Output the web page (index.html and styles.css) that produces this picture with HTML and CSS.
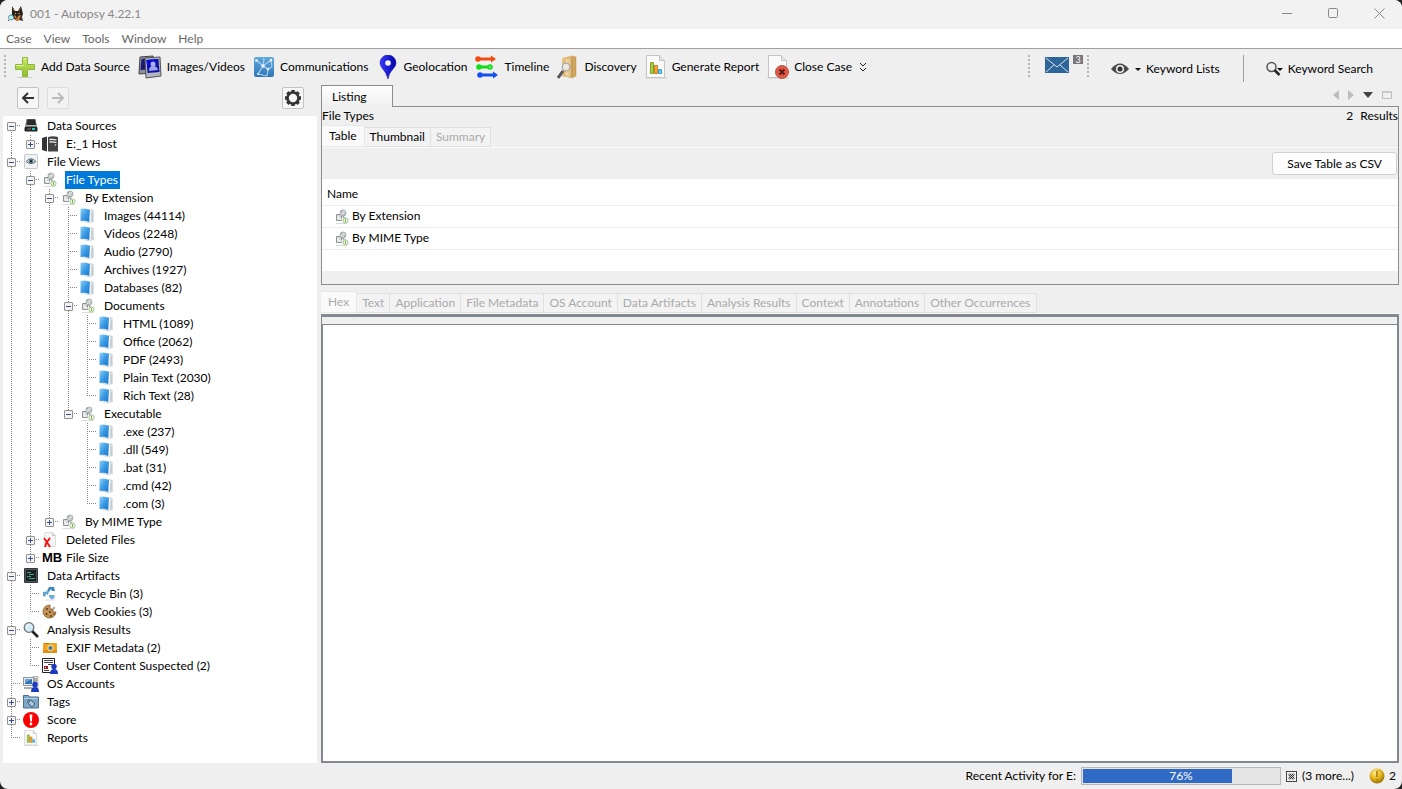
FILE: index.html
```html
<!DOCTYPE html>
<html lang="en">
<head>
    <meta charset="UTF-8">
    <meta name="viewport" content="width=device-width, initial-scale=1.0">
    <title>001 - Autopsy 4.22.1</title>
    <link rel="stylesheet" href="styles.css">
</head>
<body>
    <!-- Shared icons -->
    <svg class="sprite" aria-hidden="true">
        <defs>
            <linearGradient id="g-blue" x1="0" y1="0" x2="1" y2="1">
                <stop offset="0" stop-color="#8fd2f7"/><stop offset=".5" stop-color="#3a9ae4"/><stop offset="1" stop-color="#1474cc"/>
            </linearGradient>
            <linearGradient id="g-grey" x1="0" y1="0" x2="1" y2="0">
                <stop offset="0" stop-color="#eef2f4"/><stop offset="1" stop-color="#b9c3c9"/>
            </linearGradient>
            <linearGradient id="g-comm" x1="0" y1="0" x2="0" y2="1">
                <stop offset="0" stop-color="#62a8dc"/><stop offset="1" stop-color="#2f76b8"/>
            </linearGradient>
            <linearGradient id="g-green" x1="0" y1="0" x2="0" y2="1">
                <stop offset="0" stop-color="#cdea6a"/><stop offset="1" stop-color="#8dbe2c"/>
            </linearGradient>
            <linearGradient id="g-pin" x1="0" y1="0" x2="1" y2="0">
                <stop offset="0" stop-color="#3a3aff"/><stop offset="1" stop-color="#0000a8"/>
            </linearGradient>
            <linearGradient id="g-folder" x1="0" y1="0" x2="1" y2="0">
                <stop offset="0" stop-color="#f7dfae"/><stop offset="1" stop-color="#c99a52"/>
            </linearGradient>
            <radialGradient id="g-gold" cx=".4" cy=".3" r=".7">
                <stop offset="0" stop-color="#fff0a0"/><stop offset=".5" stop-color="#e8b91c"/><stop offset="1" stop-color="#9c7406"/>
            </radialGradient>
        </defs>
        <symbol id="i-disk" viewBox="0 0 16 16">
            <path d="M3.500 1h9l1.500 8H2z" fill="#777"/><path d="M4.500 1.500h7.500l1 5.500H3.500z" fill="#2a2a2a"/><path d="M3 7.500h10" stroke="#b5b5b5"/>
            <rect x="1.500" y="9" width="13" height="4.500" rx="1" fill="#222"/><path d="M4 11h4" stroke="#777"/><rect x="9" y="10" width="3" height="2" fill="#19c8c8"/>
        </symbol>
        <symbol id="i-host" viewBox="0 0 16 16">
            <path d="M0 2l5-1.500v15l-5-1.500z" fill="#333"/><path d="M6 1q5-1.500 10 0v14.500H6z" fill="#444"/><path d="M7.500 3.500q4-.5 7 .5M7.500 6q4-.5 7 .5" fill="none" stroke="#eee" stroke-width="1.300"/><circle cx="13.500" cy="9" r=".8" fill="#eee"/>
        </symbol>
        <symbol id="i-view" viewBox="0 0 16 16">
            <rect x="1.500" y=".5" width="13" height="14" rx="1" fill="#f1f2f4" stroke="#c4c8cc"/>
            <path d="M3 7.500q5-5.500 10 0q-5 4-10 0z" fill="#dfe6ea" stroke="#5f676c"/><circle cx="8" cy="7.200" r="2.300" fill="#4b8191"/><circle cx="8" cy="7.200" r="1" fill="#111"/>
        </symbol>
        <symbol id="i-types" viewBox="0 0 16 16">
            <path d="M1 14h13l-2 1H2z" fill="#ddd"/>
            <path d="M2.500 5.500h5v6h-5z" fill="#d5d7d9" stroke="#909396"/><path d="M4 7v3h4" fill="none" stroke="#fff"/>
            <circle cx="9" cy="4" r="3" fill="#dde5e8" stroke="#a4a8ac"/><circle cx="9" cy="4" r="1.200" fill="#fff" stroke="#b09a90" stroke-width=".6"/>
            <path d="M7 2l1 1M11 5l-1 0" stroke="#67b7c4"/><path d="M8 6l3 4" stroke="#a8abad" stroke-width="1.500"/>
            <circle cx="11.500" cy="11.500" r="2.600" fill="#f2f9ea" stroke="#a3be8e"/><path d="M11.500 10v3" stroke="#6cb53d"/>
        </symbol>
        <symbol id="i-file" viewBox="0 0 16 16">
            <path d="M1 13.500l9 2 4-2v-1z" fill="#d3dade"/><path d="M8 .5l5.500 1.500v11l-4.500 2z" fill="url(#g-grey)"/><path d="M.5 1q5-1.500 9.500 1l-.5 12q-4-2-9-1z" fill="url(#g-blue)"/>
            <path d="M10.500 2l-.5 12.500" stroke="#fff"/><path d="M10.500 4l3-.5" stroke="#fff" stroke-width=".6"/>
        </symbol>
        <symbol id="i-deleted" viewBox="0 0 16 16">
            <path d="M2.500.5h8l3 3v11h-11z" fill="#f5f5f5" stroke="#dcdcdc"/><path d="M10.500.5v3h3" fill="#ddd" stroke="#ccc"/>
            <path d="M2 6q3 4 6 9M8 6q-4 4-5 9" fill="none" stroke="#f01010" stroke-width="1.800"/>
        </symbol>
        <symbol id="i-artifact" viewBox="0 0 16 16">
            <rect x="1" y="0" width="14" height="15" rx="1" fill="#30383a"/><rect x="2.500" y="1.500" width="11" height="12" fill="#1c2022" stroke="#555"/>
            <path d="M4 4.500h4M6 6.500h5M4 8.500h4M6 10.500h6" stroke="#3fa58a"/>
        </symbol>
        <symbol id="i-recycle" viewBox="0 0 16 16">
            <path d="M5 5l2-4 5 0 1 4-3 0-1-2-2 3z" fill="#3d86bd"/><path d="M1 6l6-1-1 4-2-1-1 3-2-1z" fill="#5fa5d3"/>
            <path d="M7 9l5 0 1 2-3 3-3-3z" fill="#6fb1da"/><path d="M3 14h10" stroke="#ddd"/>
        </symbol>
        <symbol id="i-cookie" viewBox="0 0 16 16">
            <path d="M8 1q-6 0-7 6 0 6 6 7 6 0 7-6l-3 0 0-3-3 0z" fill="#c39355" stroke="#835c2f" stroke-width=".8"/>
            <g fill="#5b3a1c"><circle cx="5" cy="5" r="1"/><circle cx="8" cy="8" r="1"/><circle cx="4.500" cy="10" r="1"/><circle cx="9" cy="12" r=".9"/><circle cx="12" cy="4" r=".8"/><circle cx="12" cy="10" r=".7"/></g>
        </symbol>
        <symbol id="i-search" viewBox="0 0 16 16">
            <path d="M9 9l6 6" stroke="#222" stroke-width="2.600"/><circle cx="6" cy="5.500" r="4.800" fill="#d5ebf6" stroke="#6b7278" stroke-width="1.300"/><path d="M3.500 5q1-2.500 3-2.500" fill="none" stroke="#fff"/>
        </symbol>
        <symbol id="i-camera" viewBox="0 0 16 16">
            <path d="M1 4q0-1 1-1h12q1 0 1 1v8q0 1-1 1H2q-1 0-1-1z" fill="#efa31e"/><path d="M2 3h5v1H2z" fill="#c67a10"/><path d="M1 10h14v2q0 1-1 1H2q-1 0-1-1z" fill="#e58c14"/>
            <circle cx="8.500" cy="8" r="3.200" fill="#f7d38a"/><circle cx="8.500" cy="8" r="2.100" fill="#3f7f9a"/>
        </symbol>
        <symbol id="i-suspect" viewBox="0 0 16 16">
            <path d="M.5.500h12v14H.5z" fill="#fff" stroke="#222"/><path d="M2 2.500h9M2 4.500h9M6 6.500h4M2 12.500h5" stroke="#444"/><rect x="2" y="8" width="4" height="3" fill="#a31525"/><rect x="3" y="9" width="1" height="1" fill="#fff"/>
            <circle cx="12" cy="8.500" r="2.700" fill="#1c3ac0"/><path d="M8 16q0-5 4-5t4 5z" fill="#1c3ac0"/>
        </symbol>
        <symbol id="i-accounts" viewBox="0 0 16 16">
            <rect x="10" y="0" width="5" height="13" fill="#cfd2d5" stroke="#999" stroke-width=".6"/><path d="M11 3h3M11 5h3" stroke="#888"/>
            <rect x=".5" y="1.500" width="10" height="8" fill="#e6eaee" stroke="#8e979e"/><rect x="2" y="3" width="7" height="5" fill="#2f72b5"/><path d="M2 3h7l-7 4z" fill="#68a3d9"/><path d="M1 12h8" stroke="#a8adb1" stroke-width="2"/>
            <circle cx="12" cy="8.500" r="2.700" fill="#1c3ac0"/><path d="M8 16q0-5 4-5t4 5z" fill="#1c3ac0"/>
        </symbol>
        <symbol id="i-tags" viewBox="0 0 16 16">
            <path d="M.5 1.500h5l1 1.500h9v11H.5z" fill="#7fa8c8" stroke="#4b6f8c"/><path d="M1 4.500h14" stroke="#b3d0e5"/><path d="M5 6h3l4 4-3 3-4-4z" fill="#a9c7dc" stroke="#3c5d78"/><circle cx="6.600" cy="7.500" r=".7" fill="#3c5d78"/>
        </symbol>
        <symbol id="i-score" viewBox="0 0 16 16">
            <circle cx="8" cy="8" r="8" fill="#f80000"/><path d="M6.600 2.500h2.800l-.5 7H7.100z" fill="#fff"/><circle cx="8" cy="12" r="1.400" fill="#fff"/>
        </symbol>
        <symbol id="i-report" viewBox="0 0 22 24">
            <path d="M0 23h22" stroke="#cfcfcf"/><path d="M1.500.5h13l5 5v17h-18z" fill="#fafafa" stroke="#c4c4c4"/><path d="M14.500.5v5h5" fill="#e7e7e7" stroke="#c4c4c4"/>
            <path d="M5.500 7.500h3v11h-3z" fill="#a8cc45" stroke="#7ca226"/><path d="M9.500 10.500h3v8h-3z" fill="#f2a645" stroke="#cf7d1b"/><path d="M13.500 14.500h3v4h-3z" fill="#73c8ea" stroke="#369cc8"/>
        </symbol>
    </svg>

    <div class="window">
        <header class="titlebar">
            <svg class="app-icon" viewBox="0 0 16 16" aria-hidden="true">
                <path d="M4 0l3 5h3l3-5 2 8-2 5-4 2-5-4z" fill="#24211f"/><path d="M5 2l1 3M12 2l-1 3" stroke="#8b5a3c"/>
                <path d="M6 9l2 1 1 3 1-3 3-1-2 5-3 1z" fill="#d88634"/><circle cx="7.500" cy="7.500" r=".7" fill="#e8a050"/><circle cx="11" cy="7.500" r=".7" fill="#e8a050"/>
                <path d="M6 13l3-1" stroke="#6b2d1a"/><circle cx="3" cy="11.500" r="2.500" fill="#c8eef4" stroke="#4694a6"/><path d="M1 14l-1 1" stroke="#444"/><path d="M11 14l4 1-1-4z" fill="#333"/>
            </svg>
            <h1>001 - Autopsy 4.22.1</h1>
            <button class="caption" aria-label="Minimize"><svg viewBox="0 0 11 11"><path d="M0 5.500h10"/></svg></button>
            <button class="caption" aria-label="Maximize"><svg viewBox="0 0 11 11"><rect x=".5" y=".5" width="9" height="9" rx="1"/></svg></button>
            <button class="caption" aria-label="Close"><svg viewBox="0 0 11 11"><path d="M.5.500l10 10M10.500.5l-10 10"/></svg></button>
        </header>

        <nav class="menubar">
            <button>Case</button>
            <button>View</button>
            <button>Tools</button>
            <button>Window</button>
            <button>Help</button>
        </nav>

        <div class="toolbar">
            <span class="grip"></span>
            <button class="tool">
                <svg width="22" height="24" viewBox="0 0 22 24"><path d="M2 22h18l-3 1H5z" fill="#ccc"/><path d="M8.500 2.500h5v7h7v5h-7v7h-5v-7h-7v-5h7z" fill="url(#g-green)" stroke="#8fb83a"/><path d="M9.500 3.500h3M2.500 10.500h7" stroke="#e6f5a8"/></svg>
                Add Data Source
            </button>
            <button class="tool">
                <svg width="24" height="24" viewBox="0 0 24 24"><path d="M2 2l13-1 2 17-16 1z" fill="#8d909a" stroke="#444"/><path d="M3.500 4l9-1 1 11-11 1z" fill="#1a1a70"/><path d="M7 3l15-1 1 19-15 2z" fill="#b4b6be" stroke="#555"/><path d="M8.500 5l12-1 1 13-12 1z" fill="#1414a4"/><path d="M8.500 5l12-1-11 9z" fill="#0808d8"/><circle cx="15" cy="9" r="2.500" fill="#a8b0f4"/><path d="M11 16q0-5 4-5t5 4z" fill="#a0a6ee"/></svg>
                Images/Videos
            </button>
            <button class="tool">
                <svg width="22" height="24" viewBox="0 0 22 24"><rect x="1" y="2" width="20" height="20" rx="2" fill="url(#g-comm)"/><path d="M3 5l7 6 8-6M10 11l-5 8M10 11l5 3 4-2M15 14l-1 7M10 11l1-8M5 19l9 2M18 5l1 7" fill="none" stroke="#a9d0ee" stroke-width="1.200"/><g fill="#e8f4fc"><circle cx="10" cy="11" r="1.800"/><circle cx="3.500" cy="5.500" r="1.300"/><circle cx="18" cy="5" r="1.300"/><circle cx="15" cy="14" r="1.300"/><circle cx="5" cy="19" r="1"/></g></svg>
                Communications
            </button>
            <button class="tool">
                <svg width="22" height="24" viewBox="0 0 22 24"><path d="M11 24Q9 17 5 13Q3 10 3 8a8 8 0 0 1 16 0q0 3-3 6-4 4-5 10z" fill="url(#g-pin)" stroke="#1a1aa0" stroke-width=".6"/><circle cx="11" cy="8" r="2.800" fill="#f4f4ff"/></svg>
                Geolocation
            </button>
            <button class="tool">
                <svg width="24" height="24" viewBox="0 0 24 24" fill="none" stroke-width="3"><g stroke="#f24a12" fill="#f24a12"><path d="M3 4h15"/><circle cx="3" cy="4" r="1.300"/><path d="M16 .5l5 3.500-5 3.500z" stroke="none"/></g><g stroke="#12dc1c"><path d="M4 12h10"/><circle cx="4" cy="12" r="1.300"/><circle cx="15" cy="12" r="1.800" stroke-width="2"/></g><g stroke="#1450f0" fill="#1450f0"><path d="M6 20h13"/><circle cx="5" cy="20" r="1.300"/><path d="M18 16.500l5 3.500-5 3.500z" stroke="none"/></g></svg>
                Timeline
            </button>
            <button class="tool">
                <svg width="22" height="24" viewBox="0 0 22 24"><path d="M5 3l8-2v20l-8 1z" fill="#e7c183"/><path d="M8 4l7-3 4 1v19l-4 2-7-2z" fill="url(#g-folder)" stroke="#c79a58" stroke-width=".6"/><path d="M15 2v20" stroke="#b58542"/><path d="M6 16l-5 7" stroke="#555" stroke-width="3"/><circle cx="9" cy="12" r="3.800" fill="#eee9e0" stroke="#aaa" stroke-width="1.300"/></svg>
                Discovery
            </button>
            <button class="tool">
                <svg width="22" height="24"><use href="#i-report"/></svg>
                Generate Report
            </button>
            <button class="tool">
                <svg width="22" height="24" viewBox="0 0 22 24"><path d="M0 23h22" stroke="#cfcfcf"/><path d="M1.500.5h13l5 5v17h-18z" fill="#fafafa" stroke="#c4c4c4"/><path d="M14.500.5v5h5" fill="#e7e7e7" stroke="#c4c4c4"/><circle cx="15" cy="17" r="6.500" fill="#df5946" stroke="#b5564a"/><path d="M12.500 14.500l5 5M17.500 14.500l-5 5" stroke="#5f1a12" stroke-width="2"/></svg>
                Close Case
            </button>
            <button class="more" aria-label="More tools"><svg width="8" height="10" viewBox="0 0 8 10"><path d="M1 1l3 3 3-3M1 6l3 3 3-3" fill="none" stroke="#222"/></svg></button>

            <div class="toolbar-right">
                <span class="grip"></span>
                <button class="mail" aria-label="Messages">
                    <svg width="24" height="16" viewBox="0 0 24 16"><path d="M0 0h24v16H0z" fill="#2f6699"/><path d="M1 1l11 9L23 1M1 15l8-7M23 15l-8-7" fill="none" stroke="#d4e2ee"/></svg>
                    <span class="badge">3</span>
                </button>
                <span class="grip"></span>
                <button class="keyword">
                    <svg width="30" height="14" viewBox="0 0 30 14"><path d="M0 7q9-11 18 0q-9 10-18 0z" fill="#4a4a4a"/><circle cx="9" cy="7" r="4" fill="#f0f0f0"/><circle cx="9" cy="7" r="2.500" fill="#333"/><path d="M24 6h6l-3 3z" fill="#111"/></svg>
                    Keyword Lists
                </button>
                <span class="divider"></span>
                <button class="keyword">
                    <svg width="17" height="16" viewBox="0 0 17 16"><circle cx="5.500" cy="6" r="4.500" fill="#eee" stroke="#555" stroke-width="1.500"/><path d="M8.500 9l5 5" stroke="#222" stroke-width="2.500"/><path d="M11 7h6l-3 3z" fill="#111"/></svg>
                    Keyword Search
                </button>
            </div>
        </div>

        <main class="workspace">
            <aside class="explorer">
                <div class="explorer-nav">
                    <button aria-label="Back"><svg viewBox="0 0 16 16"><path d="M14 8H3M8 3L3 8l5 5" fill="none" stroke="#333" stroke-width="2"/></svg></button>
                    <button aria-label="Forward" disabled><svg viewBox="0 0 16 16"><path d="M2 8h11M8 3l5 5-5 5" fill="none" stroke="#bbb" stroke-width="2"/></svg></button>
                    <button class="settings" aria-label="Options"><svg viewBox="0 0 18 18"><circle cx="9" cy="9" r="5.500" fill="none" stroke="#333" stroke-width="2.600"/><path d="M9 1v3M9 14v3M1 9h3M14 9h3M3.300 3.300l2 2M12.700 12.700l2 2M14.700 3.300l-2 2M5.300 12.700l-2 2" stroke="#333" stroke-width="3.400"/></svg></button>
                </div>

                <ul class="tree">
                    <li>
                        <div class="node"><button class="toggle" aria-label="Collapse"></button><svg><use href="#i-disk"/></svg><span>Data Sources</span></div>
                        <ul>
                            <li><div class="node"><button class="toggle closed" aria-label="Expand"></button><svg><use href="#i-host"/></svg><span>E:_1 Host</span></div></li>
                        </ul>
                    </li>
                    <li>
                        <div class="node"><button class="toggle" aria-label="Collapse"></button><svg><use href="#i-view"/></svg><span>File Views</span></div>
                        <ul>
                            <li>
                                <div class="node selected"><button class="toggle" aria-label="Collapse"></button><svg><use href="#i-types"/></svg><span>File Types</span></div>
                                <ul>
                                    <li>
                                        <div class="node"><button class="toggle" aria-label="Collapse"></button><svg><use href="#i-types"/></svg><span>By Extension</span></div>
                                        <ul>
                                            <li><div class="node leaf"><svg><use href="#i-file"/></svg><span>Images (44114)</span></div></li>
                                            <li><div class="node leaf"><svg><use href="#i-file"/></svg><span>Videos (2248)</span></div></li>
                                            <li><div class="node leaf"><svg><use href="#i-file"/></svg><span>Audio (2790)</span></div></li>
                                            <li><div class="node leaf"><svg><use href="#i-file"/></svg><span>Archives (1927)</span></div></li>
                                            <li><div class="node leaf"><svg><use href="#i-file"/></svg><span>Databases (82)</span></div></li>
                                            <li>
                                                <div class="node"><button class="toggle" aria-label="Collapse"></button><svg><use href="#i-types"/></svg><span>Documents</span></div>
                                                <ul>
                                                    <li><div class="node leaf"><svg><use href="#i-file"/></svg><span>HTML (1089)</span></div></li>
                                                    <li><div class="node leaf"><svg><use href="#i-file"/></svg><span>Office (2062)</span></div></li>
                                                    <li><div class="node leaf"><svg><use href="#i-file"/></svg><span>PDF (2493)</span></div></li>
                                                    <li><div class="node leaf"><svg><use href="#i-file"/></svg><span>Plain Text (2030)</span></div></li>
                                                    <li><div class="node leaf"><svg><use href="#i-file"/></svg><span>Rich Text (28)</span></div></li>
                                                </ul>
                                            </li>
                                            <li>
                                                <div class="node"><button class="toggle" aria-label="Collapse"></button><svg><use href="#i-types"/></svg><span>Executable</span></div>
                                                <ul>
                                                    <li><div class="node leaf"><svg><use href="#i-file"/></svg><span>.exe (237)</span></div></li>
                                                    <li><div class="node leaf"><svg><use href="#i-file"/></svg><span>.dll (549)</span></div></li>
                                                    <li><div class="node leaf"><svg><use href="#i-file"/></svg><span>.bat (31)</span></div></li>
                                                    <li><div class="node leaf"><svg><use href="#i-file"/></svg><span>.cmd (42)</span></div></li>
                                                    <li><div class="node leaf"><svg><use href="#i-file"/></svg><span>.com (3)</span></div></li>
                                                </ul>
                                            </li>
                                        </ul>
                                    </li>
                                    <li><div class="node"><button class="toggle closed" aria-label="Expand"></button><svg><use href="#i-types"/></svg><span>By MIME Type</span></div></li>
                                </ul>
                            </li>
                            <li><div class="node"><button class="toggle closed" aria-label="Expand"></button><svg><use href="#i-deleted"/></svg><span>Deleted Files</span></div></li>
                            <li><div class="node"><button class="toggle closed" aria-label="Expand"></button><b class="mb">MB</b><span>File Size</span></div></li>
                        </ul>
                    </li>
                    <li>
                        <div class="node"><button class="toggle" aria-label="Collapse"></button><svg><use href="#i-artifact"/></svg><span>Data Artifacts</span></div>
                        <ul>
                            <li><div class="node leaf"><svg><use href="#i-recycle"/></svg><span>Recycle Bin (3)</span></div></li>
                            <li><div class="node leaf"><svg><use href="#i-cookie"/></svg><span>Web Cookies (3)</span></div></li>
                        </ul>
                    </li>
                    <li>
                        <div class="node"><button class="toggle" aria-label="Collapse"></button><svg><use href="#i-search"/></svg><span>Analysis Results</span></div>
                        <ul>
                            <li><div class="node leaf"><svg><use href="#i-camera"/></svg><span>EXIF Metadata (2)</span></div></li>
                            <li><div class="node leaf"><svg><use href="#i-suspect"/></svg><span>User Content Suspected (2)</span></div></li>
                        </ul>
                    </li>
                    <li><div class="node leaf"><svg><use href="#i-accounts"/></svg><span>OS Accounts</span></div></li>
                    <li><div class="node"><button class="toggle closed" aria-label="Expand"></button><svg><use href="#i-tags"/></svg><span>Tags</span></div></li>
                    <li><div class="node"><button class="toggle closed" aria-label="Expand"></button><svg><use href="#i-score"/></svg><span>Score</span></div></li>
                    <li><div class="node leaf"><svg><use href="#i-report"/></svg><span>Reports</span></div></li>
                </ul>
            </aside>

            <div class="content">
                <div class="listing-tabs">
                    <button class="listing-tab">Listing</button>
                    <div class="tab-controls">
                        <button aria-label="Previous" disabled><svg width="6" height="10" viewBox="0 0 6 10"><path d="M6 0v10L0 5z" fill="#bdbdbd"/></svg></button>
                        <button aria-label="Next" disabled><svg width="6" height="10" viewBox="0 0 6 10"><path d="M0 0v10l6-5z" fill="#bdbdbd"/></svg></button>
                        <button aria-label="Show list"><svg width="10" height="6" viewBox="0 0 10 6"><path d="M0 0h10L5 6z" fill="#444"/></svg></button>
                        <button aria-label="Maximize pane"><svg width="10" height="8" viewBox="0 0 10 8"><path d="M.5 1h9v6.500h-9zM0 1h10" fill="none" stroke="#bdbdbd"/></svg></button>
                    </div>
                </div>

                <section class="listing">
                    <div class="listing-head">
                        <span>File Types</span>
                        <span class="count">2</span>
                        <span>Results</span>
                    </div>
                    <div class="tabs">
                        <button class="active">Table</button>
                        <button>Thumbnail</button>
                        <button disabled>Summary</button>
                    </div>
                    <div class="listing-actions">
                        <button class="save">Save Table as CSV</button>
                    </div>
                    <div class="table-wrap">
                        <table>
                            <thead>
                                <tr><th>Name</th></tr>
                            </thead>
                            <tbody>
                                <tr><td><svg><use href="#i-types"/></svg>By Extension</td></tr>
                                <tr><td><svg><use href="#i-types"/></svg>By MIME Type</td></tr>
                            </tbody>
                        </table>
                    </div>
                </section>

                <div class="tabs viewer-tabs">
                    <button class="active" disabled>Hex</button>
                    <button disabled>Text</button>
                    <button disabled>Application</button>
                    <button disabled>File Metadata</button>
                    <button disabled>OS Account</button>
                    <button disabled>Data Artifacts</button>
                    <button disabled>Analysis Results</button>
                    <button disabled>Context</button>
                    <button disabled>Annotations</button>
                    <button disabled>Other Occurrences</button>
                </div>
                <section class="viewer">
                    <div class="viewer-body"></div>
                </section>
            </div>
        </main>

        <footer class="statusbar">
            <span id="task">Recent Activity for E:</span>
            <div class="progress" role="progressbar" aria-labelledby="task" aria-valuenow="76" aria-valuemin="0" aria-valuemax="100">
                <div class="bar" style="width: 76%"></div>
                <span class="percent">76%</span>
            </div>
            <button class="cancel" aria-label="Cancel task"><svg width="11" height="11" viewBox="0 0 11 11"><rect x=".5" y=".5" width="10" height="10" fill="#f2f2f2" stroke="#444"/><path d="M3 3l5 5M8 3l-5 5" stroke="#333" stroke-width="2.400"/><path d="M3 3l5 5M8 3l-5 5" stroke="#ddd" stroke-width=".9"/></svg></button>
            <button class="tasks">(3 more...)</button>
            <button class="alerts"><svg width="16" height="16" viewBox="0 0 16 16"><circle cx="8" cy="8" r="7.500" fill="url(#g-gold)"/><path d="M8 3v6M8 11v1.500" stroke="#a87a08" stroke-width="1.600"/></svg>2</button>
        </footer>
    </div>
</body>
</html>
```
FILE: styles.css
```css
* { box-sizing: border-box; }
body { margin: 0; background: #222; color: #000; font: 12px/16px Lato, "Open Sans", sans-serif; }
button { margin: 0; padding: 0; border: 0; background: none; color: inherit; font: inherit; white-space: nowrap; }
svg { flex: none; display: block; }
ul { margin: 0; padding: 0; list-style: none; }
.sprite { position: absolute; width: 0; height: 0; }

.window { display: flex; flex-direction: column; min-height: 100vh; background: #efefef; border-radius: 8px; overflow: hidden; }

/* Title and menu */
.titlebar { display: flex; align-items: center; height: 29px; padding: 0 0 2px 8px; background: #f2f2f2; color: #888; }
.titlebar h1 { flex: 1; margin: 0; padding-left: 6px; font-size: 12px; font-weight: normal; }
.app-icon { width: 16px; height: 16px; }
.caption { display: grid; place-items: center; width: 46px; height: 27px; }
.caption svg { width: 11px; height: 11px; fill: none; stroke: #888; }
.menubar { display: flex; gap: 12px; height: 20px; padding: 0 6px; background: #fff; border-bottom: 1px solid #a0a0a0; color: #666; }

/* Toolbar */
.toolbar { display: flex; align-items: center; height: 34px; padding: 1px 29px 0 4px; }
.grip { width: 2px; height: 24px; background: repeating-linear-gradient(#b4b4b4 0 2px, transparent 2px 4px); }
.tool { display: flex; align-items: center; gap: 5px; height: 28px; margin-left: 8px; }
.more { margin-left: 7px; }
.toolbar-right { display: flex; align-items: center; margin-left: auto; }
.mail { display: flex; align-items: flex-start; gap: 4px; height: 24px; margin: 0 4px 0 15px; }
.mail svg { margin-top: 2px; }
.badge { width: 10px; height: 9px; background: #777; color: #fff; font-size: 9px; line-height: 9px; text-align: center; }
.keyword { display: flex; align-items: center; gap: 5px; height: 28px; margin: 4px 0 0 22px; }
.divider { width: 1px; height: 27px; margin: 4px 0 0 23px; background: #a0a0a0; }

.workspace { display: flex; flex: 1; padding-right: 3px; }

/* Explorer tree */
.explorer { display: flex; flex-direction: column; flex: 0 0 317px; padding-left: 3px; }
.explorer-nav { display: flex; gap: 8px; padding: 4px 13px 7px 14px; }
.explorer-nav button { display: grid; place-items: center; width: 22px; height: 22px; border: 1px solid #c3c3c3; border-radius: 2px; background: #f7f7f7; }
.explorer-nav button:disabled { border-color: #dcdcdc; background: #f2f2f2; }
.explorer-nav svg { width: 16px; height: 16px; }
.explorer-nav .settings { margin-left: auto; }
.explorer-nav .settings svg { width: 18px; height: 18px; }
.tree { flex: 1; padding-top: 1px; background: #fff; }
.tree li { background: repeating-linear-gradient(#888 0 1px, transparent 1px 2px) 8px 0 / 1px 100% no-repeat; }
.tree li:last-child { background-size: 1px 9px; }
.tree > li:first-child { background-position: 8px 9px; }
.tree ul { margin-left: 19px; }
.node { display: flex; align-items: center; height: 18px; padding-left: 4px; background: repeating-linear-gradient(90deg, #888 0 1px, transparent 1px 2px) 8px 8px / 10px 1px no-repeat; }
.node.leaf { padding-left: 20px; }
.node svg { width: 16px; height: 16px; margin-right: 7px; }
.node span { height: 18px; padding: 0 2px 0 1px; line-height: 18px; }
.node.selected span { background: #0078d7; color: #fff; }
.toggle { width: 9px; height: 9px; margin-right: 7px; border: 1px solid #919191; border-radius: 1px; background: linear-gradient(#3a4f8c, #3a4f8c) center / 5px 1px no-repeat, #f4f4f4; }
.toggle.closed { background: linear-gradient(#3a4f8c, #3a4f8c) center / 5px 1px no-repeat, linear-gradient(#3a4f8c, #3a4f8c) center / 1px 5px no-repeat, #f4f4f4; }
.mb { width: 23px; font: bold 13px/16px "Liberation Sans", Arial, sans-serif; }

/* Listing */
.content { display: flex; flex-direction: column; flex: 1; min-width: 0; margin-left: 4px; }
.listing-tabs { display: flex; align-items: flex-end; height: 24px; padding-top: 2px; }
.listing-tab { width: 72px; height: 22px; padding-left: 10px; border: 1px solid #8c8c8c; border-bottom: 0; background: linear-gradient(#fff, #efefef); text-align: left; }
.tab-controls { display: flex; flex: 1; align-items: center; justify-content: flex-end; gap: 9px; height: 22px; padding: 0 7px 1px; border-bottom: 1px solid #8c8c8c; }
.listing { border: 1px solid #8c8c8c; border-top: 0; padding-bottom: 13px; }
.listing-head { display: flex; height: 18px; padding-top: 1px; }
.listing-head .count { margin: 0 7px 0 auto; }
.tabs { display: flex; align-items: flex-end; height: 23px; border-bottom: 1px solid #fafafa; }
.tabs button { height: 20px; padding: 0 5px; border: 1px solid #e0e0e0; border-left: 0; background: #f3f3f3; }
.tabs button:disabled { color: #aaa; }
.tabs .active { height: 22px; padding: 0 7px 1px; border-color: #e8e8e8; background: #fafafa; }
.listing-actions { display: flex; justify-content: flex-end; height: 31px; padding: 4px 1px; }
.save { height: 23px; padding: 0 14px; border: 1px solid #d0d0d0; border-radius: 3px; background: #fdfdfd; }
.table-wrap { min-height: 92px; background: #fff; }
table { width: 100%; border-collapse: collapse; }
th { height: 26px; padding: 4px 5px 0; border-bottom: 1px solid #ececec; font-weight: normal; text-align: left; }
td { height: 22px; padding: 1px 12px 0; border-bottom: 1px solid #ececec; }
td svg { display: inline-block; width: 16px; height: 16px; margin-right: 2px; vertical-align: middle; }

/* Viewer */
.viewer-tabs { margin-top: 5px; height: 24px; }
.viewer { display: flex; flex: 1; border: 2px solid #83878f; border-top-width: 3px; border-left-width: 1px; padding-top: 7px; }
.viewer-body { flex: 1; border: 1px solid #83878f; border-width: 1px 0 0 1px; background: #fff; }

/* Status */
.statusbar { display: flex; align-items: center; justify-content: flex-end; height: 26px; padding-right: 6px; }
.progress { display: grid; width: 200px; height: 18px; margin: 0 5px; padding: 1px; border: 1px solid #b8b8b8; background: #e4e4e4; }
.bar { grid-area: 1 / 1; height: 14px; background: #316ac5; }
.percent { grid-area: 1 / 1; color: #fff; line-height: 14px; text-align: center; }
.cancel { margin-right: 5px; }
.tasks { margin-right: 15px; }
.alerts { display: flex; align-items: center; gap: 4px; }
```
